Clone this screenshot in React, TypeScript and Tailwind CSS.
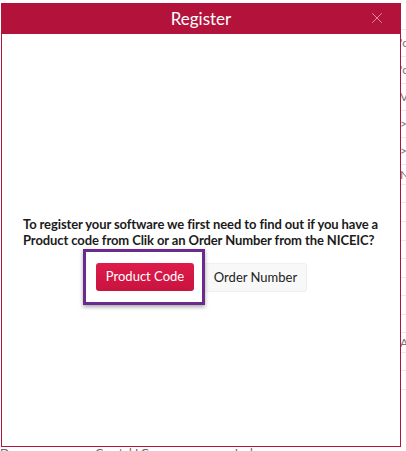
import { X } from 'lucide-react';

const backRows = [
  { h: 'h-[30px]', t: '' },
  { h: 'h-[27px]', t: "'o" },
  { h: 'h-[27px]', t: "'o" },
  { h: 'h-[27px]', t: 'V' },
  { h: 'h-[27px]', t: '>' },
  { h: 'h-[27px]', t: '>' },
  { h: 'h-[20px]', t: 'N' },
  { h: 'h-[18px]', t: '' },
  { h: 'h-[19px]', t: '' },
  { h: 'h-[19px]', t: '' },
  { h: 'h-[18px]', t: '' },
  { h: 'h-[19px]', t: '' },
  { h: 'h-[18px]', t: '' },
  { h: 'h-[19px]', t: '' },
  { h: 'h-[18px]', t: '' },
  { h: 'h-[20px]', t: 'A' },
  { h: 'h-[18px]', t: '' },
  { h: 'h-[19px]', t: '' },
];

export default function App() {
  return (
    <div className="relative w-[406px] h-[451px] overflow-hidden bg-white font-['Lato',sans-serif]">
      {/* page behind the dialog */}
      <div className="grid grid-cols-[401px_1fr] h-full">
        <div className="flex flex-col">
          <div className="flex-1" />
          <div className="h-[4px] flex gap-[86px] text-[12px] leading-[12px] text-[#666]">
            <span>D</span>
            <span>Crystal LC</span>
            <span>Isol.</span>
          </div>
        </div>
        <div className="flex flex-col">
          {backRows.map((r, i) => (
            <div
              key={i}
              className={`${r.h} border-b border-[#ececec] flex items-center text-[12px] text-[#777] leading-none`}
            >
              <span className="-ml-[1px]">{r.t}</span>
            </div>
          ))}
        </div>
      </div>

      {/* modal dialog */}
      <div className="absolute left-[1px] top-[3px] w-[400px] h-[444px] border border-t-0 border-[#b3133a] bg-white flex flex-col">
        <div className="relative h-[31px] -mx-[1px] bg-[#b3133a] flex items-center justify-center">
          <span className="text-white text-[17px] leading-none">Register</span>
          <X className="absolute right-[15px] top-[6px] w-[18px] h-[18px] text-[#e598ad]" strokeWidth={1.2} />
        </div>

        <div className="flex-1 flex flex-col items-center pt-[182px]">
          <p className="w-[356px] whitespace-nowrap text-[13px] leading-[16px] font-bold text-[#1b1b1b] tracking-[-0.1px]">
            To register your software we first need to find out if you have a
            <br />
            Product code from Clik or an Order Number from the NICEIC?
          </p>
          <div className="flex gap-[10px] mt-[15px] ml-[1px]">
            <div className="relative">
              <button className="w-[98px] h-[28px] rounded-[3px] bg-gradient-to-b from-[#de1c4b] to-[#c8133f] text-white text-[13px]">
                Product Code
              </button>
              <div className="pointer-events-none absolute -left-[13px] -right-[11px] -top-[14px] -bottom-[13px] border-[3px] border-[#6a2a8e] shadow-[0_2px_4px_rgba(0,0,0,0.35)]" />
            </div>
            <button className="w-[103px] h-[29px] rounded-[3px] bg-[#f8f8f8] border border-[#efefef] text-[#222] text-[13px]">
              Order Number
            </button>
          </div>
        </div>
      </div>
    </div>
  );
}
